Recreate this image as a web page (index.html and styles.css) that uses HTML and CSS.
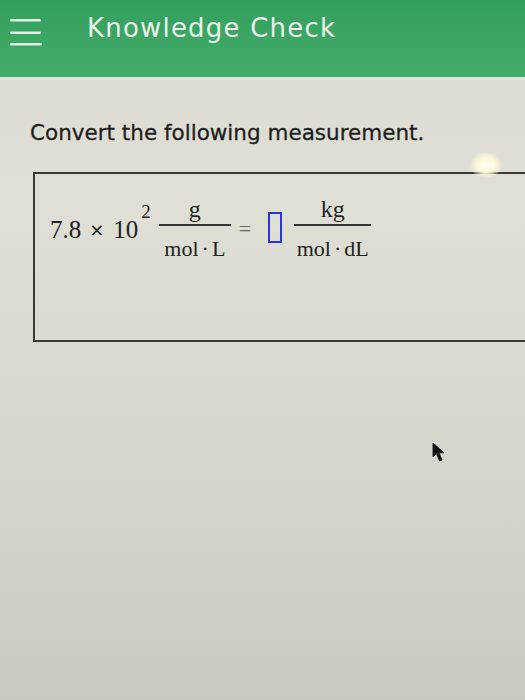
FILE: index.html
```html
<!DOCTYPE html>
<html>
<head>
<meta charset="utf-8">
<link rel="stylesheet" href="styles.css">
</head>
<body>
<div class="page">
  <header class="topbar">
    <svg class="menu" width="34" height="30" viewBox="0 0 34 30">
      <rect x="1" y="1" width="31" height="2.6" rx="1.3" fill="#e3efe4"/>
      <rect x="1" y="13.5" width="31" height="2.6" rx="1.3" fill="#e3efe4"/>
      <rect x="1" y="25" width="32" height="2.6" rx="1.3" fill="#e3efe4"/>
    </svg>
    <h1 class="title">Knowledge Check</h1>
  </header>
  <main class="content">
    <p class="prompt">Convert the following measurement.</p>
    <div class="answer-box">
      <div class="math">
        <span class="num">7.8<span class="times">×</span>10<sup class="exp">2</sup></span>
        <span class="frac">
          <span class="top">g</span>
          <span class="bar"></span>
          <span class="bottom">mol<span class="dot">·</span>L</span>
        </span>
        <span class="eq">=</span>
        <span class="input"></span>
        <span class="frac frac2">
          <span class="top">kg</span>
          <span class="bar"></span>
          <span class="bottom">mol<span class="dot">·</span>dL</span>
        </span>
      </div>
    </div>
  </main>
  <div class="glare"></div>
  <svg class="cursor" width="16" height="22" viewBox="0 0 16 22">
    <path d="M1 1 L1 15 L4.5 11.5 L7.5 19 L10 18 L7 10.8 L12 10.8 Z" fill="#111" stroke="#222" stroke-width="1"/>
  </svg>
</div>
</body>
</html>
```
FILE: styles.css
```css
html, body {
  margin: 0;
  padding: 0;
}
body {
  width: 525px;
  height: 700px;
  overflow: hidden;
  background: #d4d4cb;
}
.page {
  position: relative;
  width: 525px;
  height: 700px;
  background: linear-gradient(180deg, #dcdbd2 0%, #e0dfd6 30%, #d6d5cc 70%, #cac9c0 100%);
}
.topbar {
  height: 80px;
  display: flex;
  align-items: flex-start;
  background: linear-gradient(180deg, #34a05d 0%, #3da765 60%, #45ac6c 100%);
  border-bottom: 3px solid #e2e3da;
  box-sizing: border-box;
}
.menu {
  margin: 18px 0 0 9px;
  flex: none;
}
.title {
  margin: 13px 0 0 44px;
  font-family: "DejaVu Sans", Verdana, sans-serif;
  font-weight: normal;
  font-size: 26px;
  line-height: 30px;
  letter-spacing: 1.2px;
  color: #eaf1e8;
}
.content {
  padding: 40px 0 0 30px;
}
.prompt {
  margin: 0;
  font-family: "DejaVu Sans", Verdana, sans-serif;
  font-size: 21.5px;
  line-height: 25px;
  color: #1e1e1e;
  -webkit-text-stroke: 0.3px #1e1e1e;
}
.answer-box {
  margin: 27px 0 0 3px;
  height: 170px;
  border: 2px solid #3a3a38;
  border-right: none;
  box-sizing: border-box;
  padding: 24px 0 0 15px;
}
.math {
  display: flex;
  align-items: center;
  font-family: "Liberation Serif", "Times New Roman", serif;
  color: #222;
}
.num {
  font-size: 25px;
  line-height: 24px;
  white-space: nowrap;
  position: relative;
  top: -1px;
}
.times {
  font-family: "DejaVu Sans", sans-serif;
  font-size: 18px;
  margin: 0 9px 0 8px;
  position: relative;
  top: -2px;
}
.exp {
  font-size: 19px;
  position: relative;
  top: -11px;
  margin-left: 3px;
}
.frac {
  display: flex;
  flex-direction: column;
  align-items: center;
  margin-left: 8px;
  width: 72px;
}
.frac .top {
  font-size: 24px;
  line-height: 22px;
  padding-bottom: 4px;
}
.frac .bar {
  align-self: stretch;
  height: 1.5px;
  background: #333;
}
.frac .bottom {
  font-size: 22px;
  line-height: 22px;
  padding-top: 12px;
  white-space: nowrap;
}
.dot {
  margin: 0 3px;
}
.eq {
  margin-left: 8px;
  font-size: 22px;
  color: #666;
}
.input {
  width: 10px;
  height: 27px;
  border: 2px solid #2a34d8;
  margin-left: 17px;
  position: relative;
  top: -1px;
}
.frac2 {
  margin-left: 12px;
  width: 77px;
}
.glare {
  position: absolute;
  left: 470px;
  top: 152px;
  width: 32px;
  height: 26px;
  border-radius: 50%;
  background: radial-gradient(ellipse at center, #fffdf2 0%, #fff7d9 40%, rgba(255,240,200,0) 75%);
}
.cursor {
  position: absolute;
  left: 432px;
  top: 442px;
}
```
